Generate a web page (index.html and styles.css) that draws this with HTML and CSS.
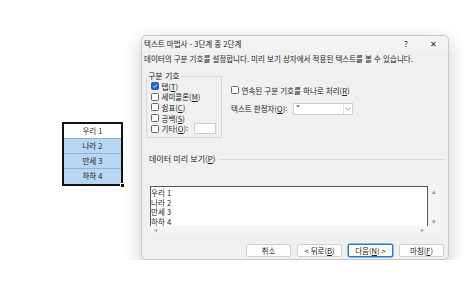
FILE: index.html
```html
<!DOCTYPE html>
<html lang="ko">
<head>
<meta charset="UTF-8">
<title>텍스트 마법사</title>
<link rel="stylesheet" href="styles.css">
</head>
<body>
<div class="page">
  <div class="sheet">
    <div class="cell">우리 1</div>
    <div class="cell sel">나라 2</div>
    <div class="cell sel">만세 3</div>
    <div class="cell sel">하하 4</div>
    <span class="handle"></span>
  </div>

  <div class="dialog">
    <div class="titlebar">
      <span class="title">텍스트 마법사 - 3단계 중 2단계</span>
      <span class="help">?</span>
      <span class="close">✕</span>
    </div>
    <div class="content">
      <p class="intro">데이터의 구분 기호를 설정합니다. 미리 보기 상자에서 적용된 텍스트를 볼 수 있습니다.</p>

      <div class="options">
        <fieldset class="delims">
          <legend>구분 기호</legend>
          <div class="check"><span class="box on"></span>탭(<u>T</u>)</div>
          <div class="check"><span class="box"></span>세미콜론(<u>M</u>)</div>
          <div class="check"><span class="box"></span>쉼표(<u>C</u>)</div>
          <div class="check"><span class="box"></span>공백(<u>S</u>)</div>
          <div class="check"><span class="box"></span>기타(<u>O</u>):<span class="other"></span></div>
        </fieldset>
        <div class="side">
          <div class="check"><span class="box"></span>연속된 구분 기호를 하나로 처리(<u>R</u>)</div>
          <div class="qualifier">
            <span>텍스트 한정자(<u>Q</u>):</span>
            <span class="combo"><span class="val">"</span><span class="arrow">
              <svg width="6" height="4" viewBox="0 0 6 4"><path d="M0.5 0.8 L3 3.2 L5.5 0.8" fill="none" stroke="#777" stroke-width="0.8"/></svg>
            </span></span>
          </div>
        </div>
      </div>

      <div class="preview-head"><span>데이터 미리 보기(<u>P</u>)</span><span class="rule"></span></div>

      <div class="preview">
        <div class="preview-main">
          <div class="preview-text">
            <div>우리 1</div>
            <div>나라 2</div>
            <div>만세 3</div>
            <div>하하 4</div>
          </div>
          <div class="hscroll"><span>◂</span><span>▸</span></div>
        </div>
        <div class="vscroll"><span>▴</span><span>▾</span></div>
      </div>

      <div class="buttons">
        <button>취소</button>
        <button>&lt; 뒤로(<u>B</u>)</button>
        <button class="default">다음(<u>N</u>) &gt;</button>
        <button>마침(<u>F</u>)</button>
      </div>
    </div>
  </div>
</div>
</body>
</html>
```

FILE: styles.css
```css
* {
  box-sizing: border-box;
}

body {
  margin: 0;
  background: #fff;
  font-family: "Noto Sans CJK KR", "Noto Sans", sans-serif;
  font-size: 7.5px;
  color: #222;
}

.page {
  display: flex;
  align-items: flex-start;
  padding: 35px 0 0 62px;
}

/* spreadsheet cells */
.sheet {
  position: relative;
  margin-top: 87px;
  margin-right: 18px;
  width: 61px;
  border: 2px solid #111;
}

.cell {
  height: 15px;
  line-height: 14px;
  text-align: center;
  font-size: 7.5px;
  border-bottom: 1px solid #8fb3d6;
  background: #fff;
}

.cell:last-of-type {
  border-bottom: none;
}

.cell.sel {
  background: #b7d6f2;
}

.handle {
  position: absolute;
  right: -4px;
  bottom: -4px;
  width: 5px;
  height: 5px;
  background: #111;
  border: 1px solid #fff;
}

/* dialog window */
.dialog {
  width: 308px;
  height: 225px;
  background: #f0f0f0;
  border: 1px solid #c9c9c9;
  border-radius: 5px;
  box-shadow: 0 6px 18px rgba(0, 0, 0, 0.22);
  display: flex;
  flex-direction: column;
}

.titlebar {
  height: 15px;
  display: flex;
  align-items: center;
  padding: 0 0 0 2px;
  background: #f3f3f3;
  border-radius: 5px 5px 0 0;
}

.title {
  flex: 1;
}

.help {
  width: 20px;
  margin-right: 7px;
  text-align: center;
  font-size: 8px;
}

.close {
  width: 20px;
  margin-right: 5px;
  text-align: center;
  font-size: 8px;
}

.content {
  flex: 1;
  padding: 0 4px 0 2px;
  display: flex;
  flex-direction: column;
}

.intro {
  margin: 3px 0 0;
  line-height: 10px;
  white-space: nowrap;
}

.options {
  display: flex;
  margin-top: 7px;
}

fieldset.delims {
  margin: 0 0 0 2px;
  padding: 0 0 0 4px;
  width: 76px;
  height: 67px;
  border: 1px solid #dadada;
  border-radius: 2px;
}

fieldset.delims legend {
  padding: 0 1px;
  margin-left: -4px;
  line-height: 10px;
  font-size: 8px;
}

.check {
  display: flex;
  align-items: center;
  height: 10.6px;
  white-space: nowrap;
}

.box {
  width: 8px;
  height: 8px;
  border: 1px solid #666;
  border-radius: 1.5px;
  background: #fff;
  margin-right: 2.5px;
  flex: none;
}

.box.on {
  background: #1a66c2 url("data:image/svg+xml,%3Csvg xmlns='http://www.w3.org/2000/svg' viewBox='0 0 8 8'%3E%3Cpath d='M1.6 4.2 L3.3 5.8 L6.4 2.3' fill='none' stroke='white' stroke-width='1.2'/%3E%3C/svg%3E") center / 100% no-repeat;
  border-color: #1a66c2;
}

.other {
  display: inline-block;
  width: 22px;
  height: 11px;
  margin-left: 6px;
  background: #fff;
  border: 1px solid #cfcfcf;
}

.side {
  margin-left: 9px;
  padding-top: 14px;
}

.qualifier {
  display: flex;
  align-items: center;
  margin-top: 7px;
}

.combo {
  display: flex;
  margin-left: 6px;
  width: 60px;
  height: 12px;
  background: #fff;
  border: 1px solid #cfcfcf;
}

.combo .val {
  flex: 1;
  padding-left: 2px;
  line-height: 10px;
}

.combo .arrow {
  width: 9px;
  display: flex;
  align-items: center;
  justify-content: center;
  border-left: 1px solid #e2e2e2;
}

/* preview */
.preview-head {
  display: flex;
  align-items: center;
  margin-top: 16px;
  padding-left: 5px;
  line-height: 10px;
  font-size: 8px;
}

.preview-head .rule {
  flex: 1;
  height: 1px;
  margin-left: 3px;
  background: #dcdcdc;
}

.preview {
  display: flex;
  margin: 22px 4px 0 6px;
  height: 48px;
}

.preview-main {
  flex: 1;
  display: flex;
  flex-direction: column;
}

.preview-text {
  flex: 1;
  background: #fff;
  border: 1px solid #555;
  border-bottom: none;
  padding-top: 1px;
  line-height: 9.6px;
  font-size: 7.5px;
}

.hscroll {
  height: 8px;
  display: flex;
  justify-content: space-between;
  padding: 0 4px;
  font-size: 6px;
  line-height: 8px;
  color: #999;
  background: #f4f4f4;
}

.vscroll {
  width: 12px;
  display: flex;
  flex-direction: column;
  justify-content: space-between;
  align-items: center;
  padding: 1px 0 9px;
  font-size: 7px;
  line-height: 8px;
  color: #999;
  background: #f4f4f4;
}

/* buttons */
.buttons {
  display: flex;
  justify-content: flex-end;
  gap: 6px;
  margin-top: 10px;
}

.buttons button {
  width: 45px;
  height: 13px;
  padding: 0;
  font-family: inherit;
  font-size: 7.5px;
  color: #222;
  background: #fdfdfd;
  border: 1px solid #d0d0d0;
  border-radius: 2px;
}

.buttons button.default {
  border-color: #2a79d0;
  box-shadow: inset 0 0 0 1px #fff, 0 0 0 0.5px #2a79d0;
}
```
